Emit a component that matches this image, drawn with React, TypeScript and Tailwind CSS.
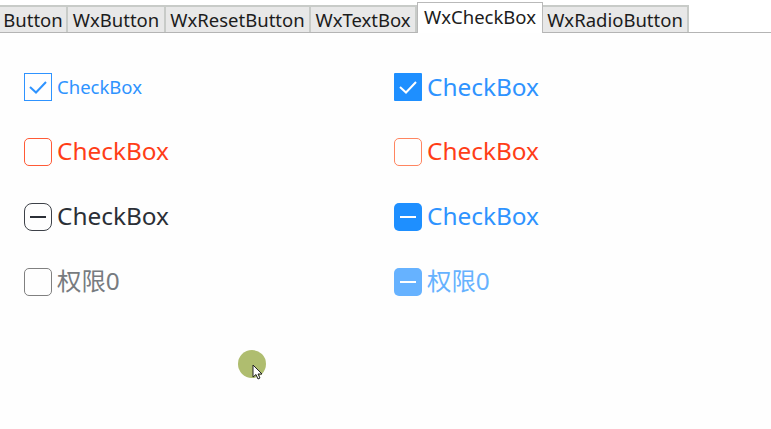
const font = { fontFamily: '"Noto Sans", "Noto Sans CJK SC", sans-serif' };

const tabs = [
  { label: "Button", width: "w-[68px]" },
  { label: "WxButton", width: "w-[98px]" },
  { label: "WxResetButton", width: "w-[145px]" },
  { label: "WxTextBox", width: "w-[106px]" },
  { label: "WxCheckBox", width: "w-[126px]", active: true },
  { label: "WxRadioButton", width: "w-[146px]" },
];

function Check({ color }: { color: string }) {
  return (
    <svg width="18" height="13" viewBox="0 0 18 13" fill="none">
      <path d="M1 6 L7 11.5 L17 1" stroke={color} strokeWidth="2" />
    </svg>
  );
}

function Dash({ color }: { color: string }) {
  return <div className="h-[2px] w-[16px]" style={{ backgroundColor: color }} />;
}

type RowProps = {
  box: string;
  text: string;
  label?: string;
  children?: React.ReactNode;
};

function CheckRow({ box, text, label = "CheckBox", children }: RowProps) {
  return (
    <div className="flex h-[28px] items-center gap-[5px]">
      <div className={`flex h-[28px] w-[28px] shrink-0 items-center justify-center ${box}`}>{children}</div>
      <span className={`whitespace-nowrap leading-[28px] ${text}`}>{label}</span>
    </div>
  );
}

export default function App() {
  return (
    <div className="relative h-[429px] w-[771px] overflow-hidden bg-[#fefefe] text-[#1f2933]" style={font}>
      <div className="flex h-[33px] items-end border-b border-[#b4b4b4] bg-white">
        {tabs.map((tab) =>
          tab.active ? (
            <div
              key={tab.label}
              className={`-mb-px flex h-[31px] items-center justify-center border border-b-0 border-[#b9b9b9] bg-white pb-[3px] text-[18.5px] text-[#1c1c1c] ${tab.width}`}
            >
              {tab.label}
            </div>
          ) : (
            <div
              key={tab.label}
              className={`flex h-[27px] items-center justify-center border-r-2 border-t-2 border-[#c8cbc8] bg-[#e8e8e8] text-[18.5px] text-[#1c1c1c] ${tab.width}`}
            >
              {tab.label}
            </div>
          )
        )}
      </div>

      <div className="grid grid-cols-[370px_1fr] gap-y-[37px] pl-[24px] pt-[40px]">
        <CheckRow box="border border-[#2e93ff]" text="text-[18.5px] text-[#2e93ff]">
          <Check color="#2e93ff" />
        </CheckRow>
        <CheckRow box="rounded-[1px] bg-[#1e8fff]" text="text-[24.4px] text-[#2e93ff]">
          <Check color="#ffffff" />
        </CheckRow>

        <CheckRow box="rounded-[5px] border border-[#ff5a36]" text="pb-[2px] text-[24.4px] text-[#ff3d17]" />
        <CheckRow box="rounded-[5px] border border-[#ff8560]" text="pb-[2px] text-[24.4px] text-[#ff3d17]" />

        <CheckRow box="rounded-[8px] border border-[#3d4148]" text="pb-[2px] text-[24.4px] text-[#2b2f36]">
          <Dash color="#2b2f36" />
        </CheckRow>
        <CheckRow box="rounded-[5px] bg-[#1e8fff]" text="pb-[2px] text-[24.4px] text-[#2e93ff]">
          <Dash color="#ffffff" />
        </CheckRow>

        <CheckRow box="rounded-[5px] border border-[#808080]" text="pb-[2px] text-[24.4px] text-[#777b80]" label="权限0" />
        <CheckRow box="rounded-[5px] bg-[#66b2ff]" text="pb-[2px] text-[24.4px] text-[#66b2ff]" label="权限0">
          <Dash color="#ffffff" />
        </CheckRow>
      </div>

      <div className="absolute left-[238px] top-[350px] h-[28px] w-[28px] rounded-full bg-[#afbd6f]">
        <svg className="absolute left-[14px] top-[14px]" width="12" height="18" viewBox="0 0 12 18">
          <path d="M1 1 V13 L4 10.5 L6 15 L8 14 L6 10 H10 Z" fill="#fff" stroke="#222" strokeWidth="1" />
        </svg>
      </div>
    </div>
  );
}
